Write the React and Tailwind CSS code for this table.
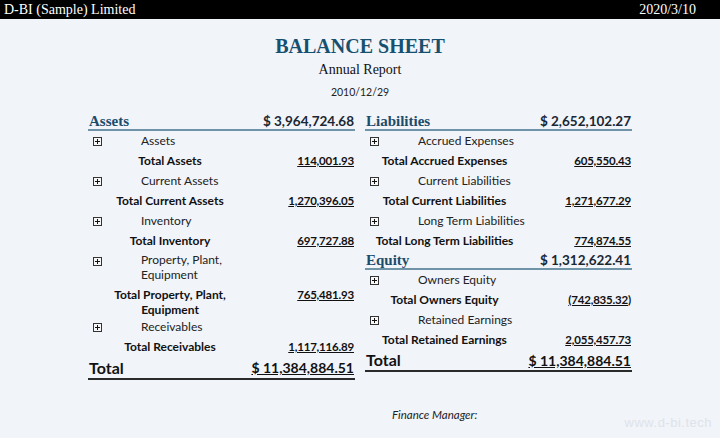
import React from "react";

function PlusBox() {
  return (
    <svg width="9" height="9" viewBox="0 0 9 9" className="block">
      <rect x="0.5" y="0.5" width="8" height="8" fill="#f7f7f7" stroke="#333" strokeWidth="1" />
      <path d="M2 4.5H7M4.5 2V7" stroke="#111" strokeWidth="1" />
    </svg>
  );
}

function SectionHeader({ title, amount, extra }) {
  return (
    <div className={"flex justify-between items-center h-[18px] border-b-2 border-[#6f93a7] " + (extra || "")}>
      <span className="font-['Liberation_Serif',serif] font-bold text-[15px] text-[#1c4c6b] pl-[1px]">{title}</span>
      <span className="font-bold text-[13.5px] text-[#1b2733] pr-[1px]">{amount}</span>
    </div>
  );
}

function Group({ label, tall }) {
  return (
    <div className={tall ? "flex h-[35px]" : "flex h-[20px]"}>
      <div className="w-[53px] shrink-0 pl-[5px] pt-[6px]">
        <PlusBox />
      </div>
      <div className={tall ? "text-[12px] leading-[15px] pt-[1px] text-[#222]" : "text-[12px] leading-[20px] text-[#222] whitespace-nowrap"}>
        {label}
      </div>
    </div>
  );
}

function TotalRow({ label, value, lw, tall }) {
  return (
    <div className={tall ? "flex h-[31px]" : "flex h-[20px] items-center"}>
      <div className={lw + (tall ? " shrink-0 text-center font-bold text-[12px] leading-[15px] pt-[1px] text-[#111]" : " shrink-0 text-center font-bold text-[12px] leading-[20px] text-[#111] whitespace-nowrap")}>
        {label}
      </div>
      <div className={tall ? "flex-1 text-right font-bold text-[11.5px] tracking-[-0.2px] leading-[15px] pt-[1px] underline text-[#111] pr-[1px]" : "flex-1 text-right font-bold text-[11.5px] tracking-[-0.2px] leading-[20px] underline text-[#111] pr-[1px]"}>
        {value}
      </div>
    </div>
  );
}

function GrandTotal({ value, h }) {
  return (
    <div className={"flex justify-between items-center border-b-2 border-[#2a2a2a] " + h}>
      <span className="font-bold text-[16px] text-[#111] pl-[1px]">Total</span>
      <span className="font-bold text-[14px] text-[#111] underline pr-[1px]">{value}</span>
    </div>
  );
}

export default function App() {
  return (
    <div className="relative w-[720px] h-[438px] overflow-hidden bg-[#f1f4f9] font-['Lato',sans-serif]">
      <div className="flex justify-between items-center h-[19px] bg-black text-white font-['Liberation_Serif',serif] text-[14px] pl-[4px] pr-[24px]">
        <span className="font-['Liberation_Serif',serif]">D-BI (Sample) Limited</span>
        <span className="font-['Liberation_Serif',serif]">2020/3/10</span>
      </div>

      <div className="flex flex-col items-center pt-[15px]">
        <div className="font-['Liberation_Serif',serif] font-bold text-[20px] leading-[24px] text-[#17506f]">BALANCE SHEET</div>
        <div className="font-['Liberation_Serif',serif] text-[14px] leading-[20px] mt-[2px] text-[#111]">Annual Report</div>
        <div className="text-[10.5px] leading-[16px] mt-[4px] text-[#222]">2010/12/29</div>
      </div>

      <div className="w-[544px] mx-auto mt-[13px] grid grid-cols-2 gap-[10px] items-start">
        <div className="flex flex-col">
          <SectionHeader title="Assets" amount="$ 3,964,724.68" />
          <Group label="Assets" />
          <TotalRow lw="w-[164px]" label="Total Assets" value="114,001.93" />
          <Group label="Current Assets" />
          <TotalRow lw="w-[164px]" label="Total Current Assets" value="1,270,396.05" />
          <Group label="Inventory" />
          <TotalRow lw="w-[164px]" label="Total Inventory" value="697,727.88" />
          <Group tall label={<>Property, Plant,<br />Equipment</>} />
          <TotalRow tall lw="w-[164px]" label={<>Total Property, Plant,<br />Equipment</>} value="765,481.93" />
          <Group label="Receivables" />
          <TotalRow lw="w-[164px]" label="Total Receivables" value="1,117,116.89" />
          <GrandTotal h="h-[23px]" value="$ 11,384,884.51" />
        </div>

        <div className="flex flex-col">
          <SectionHeader title="Liabilities" amount="$ 2,652,102.27" />
          <Group label="Accrued Expenses" />
          <TotalRow lw="w-[159px]" label="Total Accrued Expenses" value="605,550.43" />
          <Group label="Current Liabilities" />
          <TotalRow lw="w-[159px]" label="Total Current Liabilities" value="1,271,677.29" />
          <Group label="Long Term Liabilities" />
          <TotalRow lw="w-[159px]" label="Total Long Term Liabilities" value="774,874.55" />
          <SectionHeader extra="mt-[1px]" title="Equity" amount="$ 1,312,622.41" />
          <Group label="Owners Equity" />
          <TotalRow lw="w-[159px]" label="Total Owners Equity" value="(742,835.32)" />
          <Group label="Retained Earnings" />
          <TotalRow lw="w-[159px]" label="Total Retained Earnings" value="2,055,457.73" />
          <GrandTotal h="h-[22px]" value="$ 11,384,884.51" />
        </div>
      </div>

      <div className="w-[544px] mx-auto mt-[26px] grid grid-cols-2 gap-[10px]">
        <div />
        <div className="pl-[27px] italic text-[11.5px] text-[#222]">Finance Manager:</div>
      </div>

      <div className="absolute right-[8px] bottom-[6px] text-[13px] text-[#dfe3e9] font-['Liberation_Sans',sans-serif] tracking-[0.5px]">www.d-bi.tech</div>
    </div>
  );
}
